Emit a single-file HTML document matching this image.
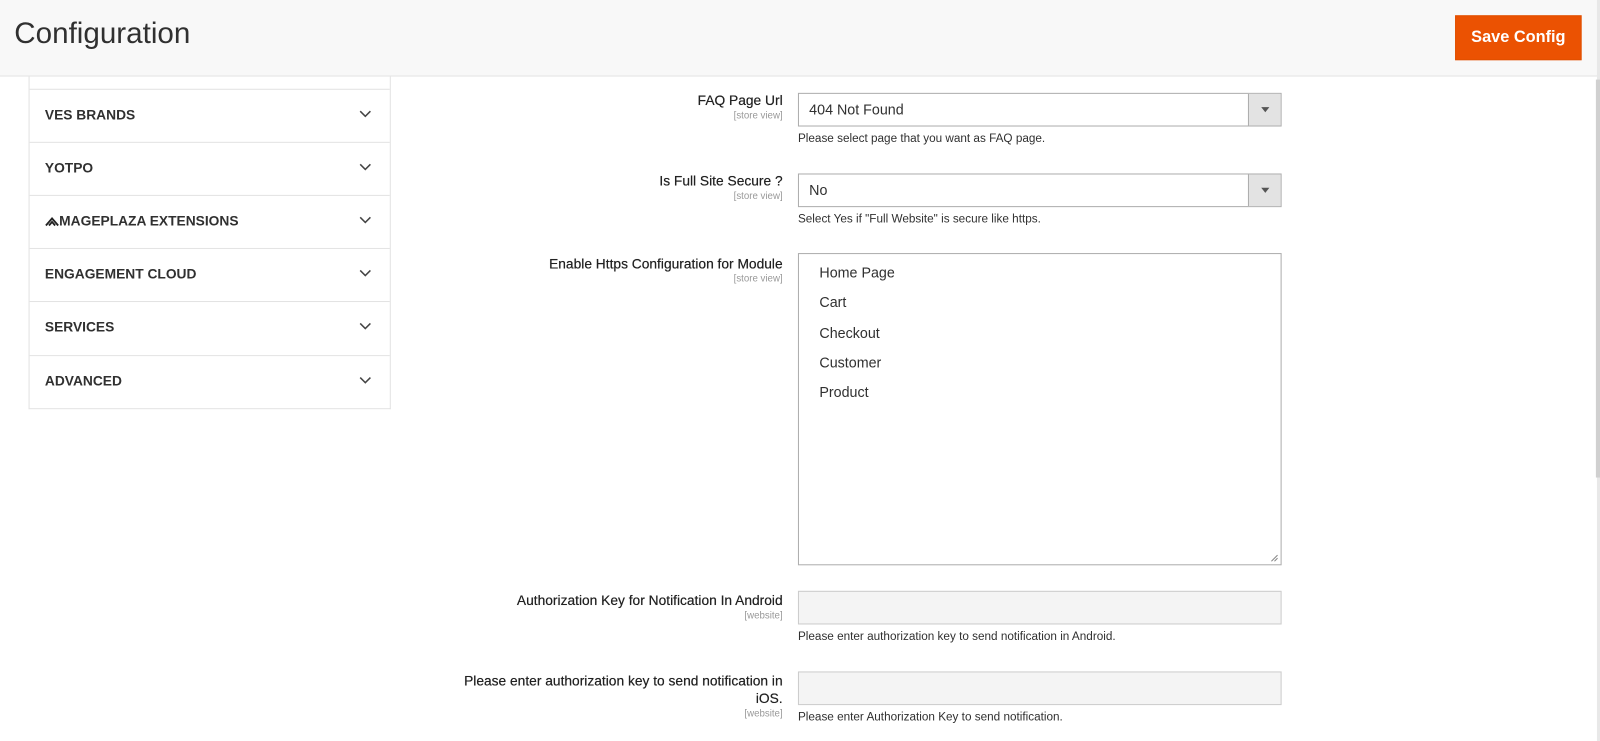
<!DOCTYPE html>
<html><head><meta charset="utf-8"><style>
*{box-sizing:border-box;margin:0;padding:0}
html,body{width:1600px;height:741px;overflow:hidden;background:#fff}
body{font-family:"Liberation Sans",sans-serif;color:#303030;position:relative}
#w{position:absolute;left:0;top:0;width:1568px;height:727px;transform:scale(1.0204);transform-origin:0 0}
.abs{position:absolute}
.hdr{left:0;top:0;width:1566px;height:75px;background:#f8f8f8;border-bottom:1px solid #e3e3e3}
.title{left:14px;top:17px;font-size:29px;color:#303030}
.btn{left:1426px;top:15px;width:124px;height:44px;background:#eb5202;border:1px solid #e04f00;color:#fff;font-weight:bold;font-size:16px;text-align:center;line-height:42px}
.sb{left:28px;top:75px;width:355px;height:326px;border:1px solid #e3e3e3;border-top:none}
.row{position:absolute;left:0;width:353px;height:52px;border-top:1px solid #e3e3e3;font-weight:bold;font-size:13.5px;padding-left:15px;line-height:50px;color:#303030}
.chev{position:absolute;right:18px;top:20px}
.lbl{right:801px;text-align:right;font-size:13.5px;color:#222;line-height:17px;text-shadow:0 0 0.4px #222}
.sc{display:block;font-size:9.5px;color:#999;line-height:12px;text-shadow:none;margin-top:1px}
.sel{left:782px;width:474px;height:33px;border:1px solid #adadad;font-size:14px;line-height:31px;padding-left:10px}
.arr{position:absolute;right:0;top:0;width:32px;height:31px;background:#e3e3e3;border-left:1px solid #adadad}
.arr:after{content:"";position:absolute;left:12px;top:13px;border-left:4px solid transparent;border-right:4px solid transparent;border-top:5px solid #555}
.note{left:782px;font-size:11.5px;color:#303030}
.inp{left:782px;width:474px;height:33px;border:1px solid #ccc;background:#f4f4f4}
.ms{left:782px;top:248px;width:474px;height:306px;border:1px solid #adadad;padding:10px 20px;font-size:14px}
.ms div{height:29.3px}
</style></head><body><div id="w">
<div class="abs hdr"></div>
<div class="abs title">Configuration</div>
<div class="abs btn">Save Config</div>
<div class="abs" style="left:1565px;top:0;width:3px;height:741px;background:#e8e8e8"></div>
<div class="abs" style="left:1564px;top:78px;width:4px;height:390px;background:#d0d0d0"></div>
<div class="abs sb">
<div class="row" style="top:12px">VES BRANDS<svg class="chev" width="12" height="8"><path d="M1 1l5 5 5-5" fill="none" stroke="#444" stroke-width="1.5"/></svg></div>
<div class="row" style="top:64px">YOTPO<svg class="chev" width="12" height="8"><path d="M1 1l5 5 5-5" fill="none" stroke="#444" stroke-width="1.5"/></svg></div>
<div class="row" style="top:116px"><svg width="14" height="10" style="vertical-align:-1px"><path d="M1 9L7 2l6 7M4 9l3-3.5 3 3.5" fill="none" stroke="#222" stroke-width="1.8"/></svg>MAGEPLAZA EXTENSIONS<svg class="chev" width="12" height="8"><path d="M1 1l5 5 5-5" fill="none" stroke="#444" stroke-width="1.5"/></svg></div>
<div class="row" style="top:168px">ENGAGEMENT CLOUD<svg class="chev" width="12" height="8"><path d="M1 1l5 5 5-5" fill="none" stroke="#444" stroke-width="1.5"/></svg></div>
<div class="row" style="top:220px">SERVICES<svg class="chev" width="12" height="8"><path d="M1 1l5 5 5-5" fill="none" stroke="#444" stroke-width="1.5"/></svg></div>
<div class="row" style="top:273px">ADVANCED<svg class="chev" width="12" height="8"><path d="M1 1l5 5 5-5" fill="none" stroke="#444" stroke-width="1.5"/></svg></div>
</div>

<div class="abs lbl" style="top:90px">FAQ Page Url<span class="sc">[store view]</span></div>
<div class="abs sel" style="top:91px">404 Not Found<div class="arr"></div></div>
<div class="abs note" style="top:130px">Please select page that you want as FAQ page.</div>

<div class="abs lbl" style="top:169px">Is Full Site Secure ?<span class="sc">[store view]</span></div>
<div class="abs sel" style="top:170px">No<div class="arr"></div></div>
<div class="abs note" style="top:209px">Select Yes if "Full Website" is secure like https.</div>

<div class="abs lbl" style="top:250px">Enable Https Configuration for Module<span class="sc">[store view]</span></div>
<div class="abs ms"><div>Home Page</div><div>Cart</div><div>Checkout</div><div>Customer</div><div>Product</div>
<svg style="position:absolute;right:2px;bottom:2px" width="8" height="8"><path d="M7 1L1 7M7 4L4 7" stroke="#888" stroke-width="1"/></svg></div>

<div class="abs lbl" style="top:580px">Authorization Key for Notification In Android<span class="sc">[website]</span></div>
<div class="abs inp" style="top:579px"></div>
<div class="abs note" style="top:618px">Please enter authorization key to send notification in Android.</div>

<div class="abs lbl" style="top:659px">Please enter authorization key to send notification in<br>iOS.<span class="sc">[website]</span></div>
<div class="abs inp" style="top:658px"></div>
<div class="abs note" style="top:697px">Please enter Authorization Key to send notification.</div>
</div></body></html>
